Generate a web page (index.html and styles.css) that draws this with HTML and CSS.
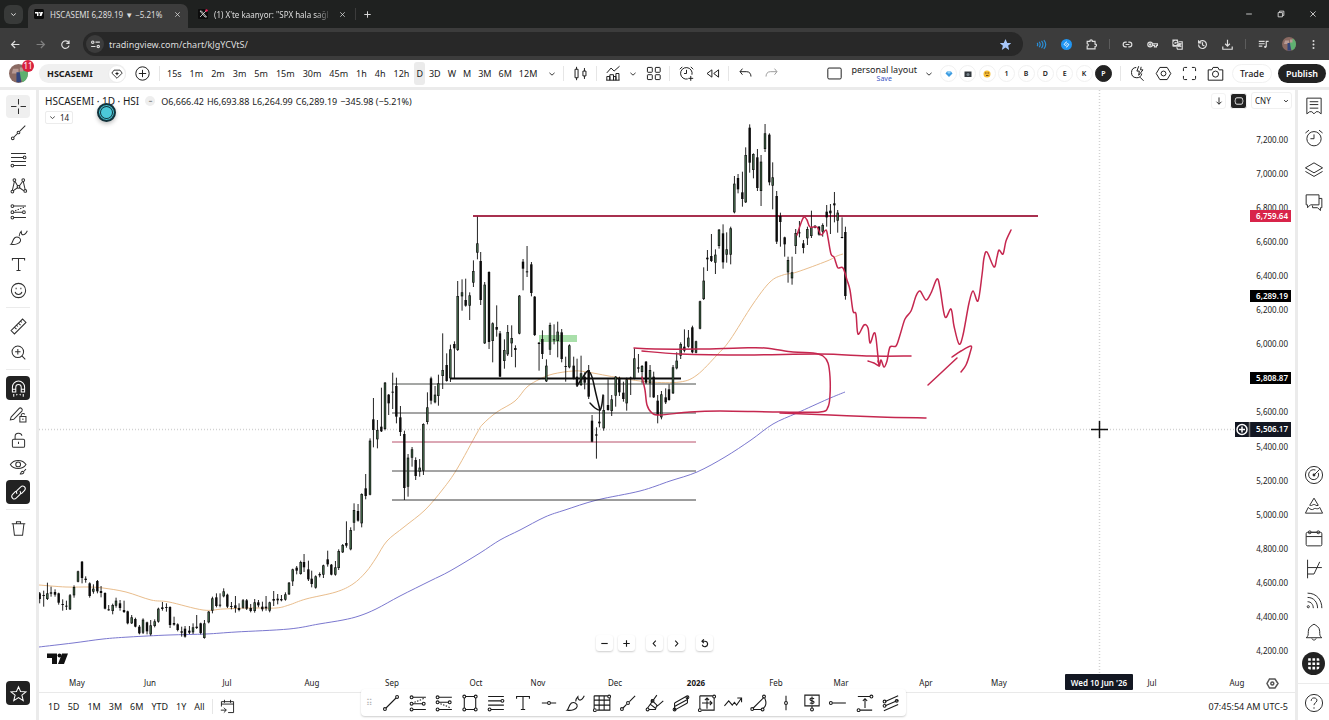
FILE: index.html
```
<!DOCTYPE html>
<html lang="en">
<head>
  <meta charset="UTF-8">
  <title>HSCASEMI 6,289.19 ▼ −5.21%</title>
  <link rel="stylesheet" href="styles.css">
</head>
<body>

  <svg class="sprite" aria-hidden="true">
    <symbol id="i-cross" viewBox="0 0 28 28"><path d="M14 3v8M14 17v8M3 14h8M17 14h8"/></symbol>
    <symbol id="i-trend" viewBox="0 0 28 28"><path d="M7 21L21 7"/><circle cx="5.5" cy="22.5" r="2"/><circle cx="22.500" cy="5.500" r="2"/></symbol>
    <symbol id="i-ray" viewBox="0 0 28 28"><path d="M7 21l5-5M16 12l8-8"/><circle cx="5.500" cy="22.500" r="2"/><circle cx="14" cy="14" r="2"/></symbol>
    <symbol id="i-fib" viewBox="0 0 28 28"><path d="M3 5h22M3 11h18M3 17h22M7 23h18"/><circle cx="23" cy="11" r="2"/><circle cx="5" cy="23" r="2"/></symbol>
    <symbol id="i-pattern" viewBox="0 0 28 28"><path d="M5 21L8 8M9 8l4 7M15 15l5-7M21 8l3 13M6 22l7-5M15 17l7 5"/><circle cx="5" cy="23" r="2"/><circle cx="8" cy="6" r="2"/><circle cx="14" cy="16" r="2"/><circle cx="21" cy="6" r="2"/><circle cx="24" cy="22" r="2"/></symbol>
    <symbol id="i-long" viewBox="0 0 28 28"><path d="M7 6h18M7 15h13M7 23h18"/><path stroke-dasharray="2 2" d="M9 13l15-6"/><circle cx="5" cy="6" r="2"/><circle cx="5" cy="15" r="2"/><circle cx="22" cy="15" r="2"/><circle cx="5" cy="23" r="2"/></symbol>
    <symbol id="i-short" viewBox="0 0 28 28"><path d="M7 6h18M7 13h13M7 23h18"/><path stroke-dasharray="2 2" d="M9 15l15 6"/><circle cx="5" cy="6" r="2"/><circle cx="5" cy="13" r="2"/><circle cx="22" cy="13" r="2"/><circle cx="5" cy="23" r="2"/></symbol>
    <symbol id="i-brush" viewBox="0 0 28 28"><path d="M3 24c2-1 2-7 6-10 4-2 9 1 8 5-1 4-8 6-14 5zM15 12c0-3 1-5 3-7 0 3 1 5 3 5s4-2 6-6"/></symbol>
    <symbol id="i-text" viewBox="0 0 28 28"><path d="M5 8V5h18v3M14 5v18M11 23h6"/></symbol>
    <symbol id="i-smile" viewBox="0 0 28 28"><circle cx="14" cy="14" r="10.500"/><path d="M9 16c1 5 9 5 10 0M10.500 10v2M17.500 10v2"/></symbol>
    <symbol id="i-ruler" viewBox="0 0 28 28"><path d="M3 20L20 3l5 5L8 25zM8 15l3 3M11 12l2 2M14 9l3 3M17 6l2 2"/></symbol>
    <symbol id="i-zoom" viewBox="0 0 28 28"><circle cx="13" cy="13" r="8.500"/><path d="M19 19l5 5M9 13h8M13 9v8"/></symbol>
    <symbol id="i-magnet" viewBox="0 0 28 28"><path d="M5 19v-7a9 9 0 0 1 18 0v7h-5v-7a4 4 0 0 0-8 0v7zM5 15h5M18 15h5M7 22v4M21 22v4M12 22l-1 2M16 22l1 2"/></symbol>
    <symbol id="i-penlock" viewBox="0 0 28 28"><path d="M3 18L15 5c2-2 6 1 4 4L7 21l-5 1zM16 17h9v8h-9zM18 17v-2c0-3 5-3 5-1M20.500 20v2"/></symbol>
    <symbol id="i-lock" viewBox="0 0 28 28"><rect x="5" y="12" width="18" height="12" rx="2"/><path d="M9 12V8c0-6 9-6 10-1M14 16v3"/></symbol>
    <symbol id="i-eye" viewBox="0 0 28 28"><path d="M2 11c5-8 18-8 23 0-5 8-18 8-23 0zM16 25c2 0 1-4 4-4 4 1 1 5-4 4zM22 21l3-3"/><circle cx="13.500" cy="11" r="3.500"/></symbol>
    <symbol id="i-link" viewBox="0 0 28 28"><path d="M12 16c-2-2-1-4 0-5l5-5c4-4 9 1 6 5l-5 5M16 12c2 2 1 4 0 5l-5 5c-4 4-9-1-6-5l5-5"/></symbol>
    <symbol id="i-trash" viewBox="0 0 28 28"><path d="M4 7h20M11 7V4h6v3M6 7l2 17h12l2-17"/></symbol>
    <symbol id="i-star" viewBox="0 0 28 28"><path d="M14 4l3 7 8 .500-6 5 2 8-7-4.500-7 4.500 2-8-6-5 8-.500z"/></symbol>

    <symbol id="i-rect" viewBox="0 0 28 28"><path d="M6 7v14M22 7v14M8 5h12M8 23h12"/><circle cx="6" cy="5" r="2"/><circle cx="22" cy="5" r="2"/><circle cx="6" cy="23" r="2"/><circle cx="22" cy="23" r="2"/></symbol>
    <symbol id="i-hline" viewBox="0 0 28 28"><path d="M4 14h8M16 14h8"/><circle cx="14" cy="14" r="2"/></symbol>
    <symbol id="i-vline" viewBox="0 0 28 28"><path d="M14 4v8M14 16v8"/><circle cx="14" cy="14" r="2"/></symbol>
    <symbol id="i-hray" viewBox="0 0 28 28"><path d="M6 14h19"/><circle cx="4" cy="14" r="2"/></symbol>
    <symbol id="i-gann" viewBox="0 0 28 28"><path d="M3 4h19M3 4v18M7 24h18V7M3 10h22M3 17h22M10 4v20M17 4v20"/><circle cx="24" cy="5" r="2"/><circle cx="4" cy="24" r="2"/></symbol>
    <symbol id="i-fork" viewBox="0 0 28 28"><path d="M5 21L18 3M7 23h9l2-6M13 12l6 6 8-7M9 16l8 6M11 9l-1 4"/><circle cx="5" cy="23" r="2"/><circle cx="12" cy="11" r="2"/></symbol>
    <symbol id="i-channel" viewBox="0 0 28 28"><path d="M5 14l16-9M5 19l18-10M5 24l18-10M5 14v10M23 5v9"/><circle cx="5" cy="23" r="2"/><circle cx="23" cy="6" r="2"/></symbol>
    <symbol id="i-range" viewBox="0 0 28 28"><path d="M4 4h18M4 4v18M7 24h17V7M14 7v15M11 10l3-3 3 3M7 14h14M18 11l3 3-3 3"/><circle cx="24" cy="5" r="2"/><circle cx="4" cy="24" r="2"/></symbol>
    <symbol id="i-wave" viewBox="0 0 28 28"><path d="M2 18l6-7 5 6 3-4 3 4 7-10M20 7h6v6"/></symbol>
    <symbol id="i-arc" viewBox="0 0 28 28"><path d="M6 21L21 6M6 23h11M22 7c3 7 2 12-3 15"/><circle cx="4.500" cy="22.500" r="2"/><circle cx="21" cy="5" r="2"/><circle cx="19" cy="23" r="2"/></symbol>
    <symbol id="i-price" viewBox="0 0 28 28"><path d="M4 3h20v15H4zM14 18v3M17 8c-6-3-8 2-3 3s3 5-3 3M14 5v11"/><circle cx="14" cy="23" r="2"/></symbol>
    <symbol id="i-measure" viewBox="0 0 28 28"><path d="M4 5h17M7 24h17M14 9v12M11 11l3-3 3 3"/><circle cx="23" cy="5" r="2"/><circle cx="5" cy="24" r="2"/></symbol>
    <symbol id="i-parallel" viewBox="0 0 28 28"><path d="M6 12L24 4M6 18l18-8M4 25l20-9"/><circle cx="5" cy="12" r="2"/><circle cx="5" cy="18" r="2"/><circle cx="22" cy="11" r="2"/></symbol>

    <symbol id="i-chev" viewBox="0 0 28 28"><path d="M5 10l9 8 9-8"/></symbol>
    <symbol id="i-gem" viewBox="0 0 28 28"><path d="M7 5h14l5 7-12 12L2 12z"/><path class="solid" d="M14 8l1.500 3.500L19 13l-3.500 1.500L14 18l-1.500-3.500L9 13l3.500-1.500z"/></symbol>
    <symbol id="i-plus-circle" viewBox="0 0 28 28"><circle cx="14" cy="14" r="11"/><path d="M14 8v12M8 14h12"/></symbol>
    <symbol id="i-candles" viewBox="0 0 28 28"><path d="M5 7h5v14H5zM7.500 3v4M7.500 21v4M18 10h5v8h-5zM20.500 5v5M20.500 18v5"/></symbol>
    <symbol id="i-indicators" viewBox="0 0 28 28"><path d="M3 25v-6h5v6M8 25V16h6v9M14 25v-6h4v6M18 25V14h5v11M2 25h22M3 13l7-8 5 5 9-8"/></symbol>
    <symbol id="i-grid" viewBox="0 0 28 28"><rect x="4" y="4" width="8" height="8" rx="1"/><rect x="17" y="4" width="8" height="8" rx="1"/><rect x="4" y="16" width="8" height="8" rx="1"/><rect x="17" y="16" width="8" height="8" rx="1"/></symbol>
    <symbol id="i-alert" viewBox="0 0 28 28"><path d="M23 16a9.500 9.500 0 1 0-7 7M14 8v6h-4M3 7l4-4M21 3l4 4M21 18v8M17 22h8"/></symbol>
    <symbol id="i-clock" viewBox="0 0 28 28"><circle cx="14" cy="15" r="10"/><path d="M14 9v6h-5M2 7l5-4M21 3l5 4"/></symbol>
    <symbol id="i-rewind" viewBox="0 0 28 28"><path d="M13 8v12l-8-6zM24 8v12l-8-6z"/></symbol>
    <symbol id="i-undo" viewBox="0 0 28 28"><path d="M9 6l-4 5 4 5M5 11h11c5 0 7 4 7 8"/></symbol>
    <symbol id="i-redo" viewBox="0 0 28 28"><path d="M19 6l4 5-4 5M23 11H12c-5 0-7 4-7 8"/></symbol>
    <symbol id="i-square" viewBox="0 0 28 28"><rect x="3" y="5" width="22" height="18" rx="2"/></symbol>
    <symbol id="i-search" viewBox="0 0 28 28"><path d="M12 4a8.500 8.500 0 1 0 9 10M18 20l6 6M16 2l-3 8h4l-1 7 7-9h-4l1-5"/></symbol>
    <symbol id="i-hex" viewBox="0 0 28 28"><path d="M8 4h12l6 10-6 10H8L2 14z"/><circle cx="14" cy="14" r="4"/></symbol>
    <symbol id="i-full" viewBox="0 0 28 28"><path d="M4 10V6q0-2 2-2h4M18 4h4q2 0 2 2v4M24 18v4q0 2-2 2h-4M10 24H6q-2 0-2-2v-4"/></symbol>
    <symbol id="i-camera" viewBox="0 0 28 28"><path d="M2 8h6l2-4h8l2 4h6v17H2z"/><circle cx="14" cy="15" r="5"/></symbol>

    <symbol id="i-list" viewBox="0 0 28 28"><path d="M4 3h20v22l-4-3h-3l-3 3-3-3H8l-4 3zM8 8h12M8 12h12M8 17h12"/></symbol>
    <symbol id="i-layers" viewBox="0 0 28 28"><path d="M14 4l12 7-12 7-12-7zM2 16l12 7 12-7"/></symbol>
    <symbol id="i-chat" viewBox="0 0 28 28"><path d="M3 4h18v14H9l-4 4v-4H3zM21 9h4v13h-2v4l-4-4h-7v-3"/></symbol>
    <symbol id="i-target" viewBox="0 0 28 28"><circle cx="14" cy="14" r="12"/><path d="M20 11a7 7 0 1 1-4-4M14 14l8-8"/><circle class="solid" cx="14" cy="14" r="2"/></symbol>
    <symbol id="i-pyramid" viewBox="0 0 28 28"><path d="M14 3l6 10c-3 2-4-2-7-1-2 1-3 2-5 1zM6 16l-4 8h24l-4-8c-3 4-6 0-8 2-3 2-5 1-8-2z"/></symbol>
    <symbol id="i-calendar" viewBox="0 0 28 28"><rect x="3" y="6" width="22" height="19" rx="2"/><path d="M3 12h22M10 6h8"/><circle cx="8" cy="6" r="2"/><circle cx="20" cy="6" r="2"/></symbol>
    <symbol id="i-options" viewBox="0 0 28 28"><path d="M5 1v26M5 12h20M5 21h9L22 4"/></symbol>
    <symbol id="i-feed" viewBox="0 0 28 28"><circle cx="6" cy="22" r="1.500"/><path d="M5 15c5 0 8 4 8 9M5 9c9 0 14 7 14 15M5 3c13 0 20 10 20 21"/></symbol>
    <symbol id="i-bell" viewBox="0 0 28 28"><path d="M3 22c3-2 3-4 3-9 0-6 5-8 8-10 3 2 8 4 8 10 0 5 0 7 3 9zM11 23c1 3 5 3 6 0"/></symbol>
    <symbol id="i-apps" viewBox="0 0 28 28"><path class="solid" d="M4 4h5v5H4zM12 4h5v5h-5zM20 4h5v5h-5zM4 12h5v5H4zM12 12h5v5h-5zM20 12h5v5h-5zM4 20h5v5H4zM12 20h5v5h-5zM20 20h5v5h-5z"/></symbol>
    <symbol id="i-help" viewBox="0 0 28 28"><circle cx="14" cy="14" r="12"/><path d="M10 11c0-6 9-5 8 0-1 3-4 3-4 6M14 20v2"/></symbol>
    <symbol id="i-goto" viewBox="0 0 28 28"><path d="M4 14V6h20v18h-9M4 10h20M9 3v5M19 3v5M3 20h9M8 16l4 4-4 4"/></symbol>

    <symbol id="i-back" viewBox="0 0 28 28"><path d="M24 14H5M13 5l-9 9 9 9"/></symbol>
    <symbol id="i-forward" viewBox="0 0 28 28"><path d="M4 14h19M15 5l9 9-9 9"/></symbol>
    <symbol id="i-reload" viewBox="0 0 28 28"><path d="M23 17a9.500 9.500 0 1 1-2-9l2 3M23 4v7h-7"/></symbol>
    <symbol id="i-tune" viewBox="0 0 28 28"><circle cx="7" cy="8" r="3"/><circle cx="21" cy="19" r="3"/><path d="M14 8h11M3 19h11"/></symbol>
    <symbol id="i-close" viewBox="0 0 28 28"><path d="M5 5l18 18M23 5L5 23"/></symbol>
    <symbol id="i-min" viewBox="0 0 28 28"><path d="M4 14h20"/></symbol>
    <symbol id="i-plus" viewBox="0 0 28 28"><path d="M14 4v20M4 14h20"/></symbol>
    <symbol id="i-restore" viewBox="0 0 28 28"><path d="M4 9h15v15H4zM9 9V4h15v15h-5"/></symbol>
    <symbol id="i-puzzle" viewBox="0 0 28 28"><path d="M3 6h7c-1-5 7-5 6 0h7v7c5 0 5 6 0 6v6H3v-7c4 0 4-6 0-6z"/></symbol>
    <symbol id="i-chain" viewBox="0 0 28 28"><path d="M12 8H9a6 6 0 0 0 0 12h3M16 8h3a6 6 0 0 1 0 12h-3M9 14h10"/></symbol>
    <symbol id="i-key" viewBox="0 0 28 28"><circle cx="8" cy="14" r="6"/><circle cx="8" cy="14" r="1.500"/><path d="M14 12h13v4h-3v4h-5v-4h-5"/></symbol>
    <symbol id="i-translate" viewBox="0 0 28 28"><path class="solid" d="M1 1h14l4 19H3q-2 0-2-2z"/><path class="letter" d="M12 8a4 4 0 1 0 0 4H9"/><path d="M17 7h9v19H14l-2-5M17 12h7M20 10v2M22 12c-1 4-3 6-5 8M18 14l5 6"/></symbol>
    <symbol id="i-history" viewBox="0 0 28 28"><path d="M4 14a10 10 0 1 0 3-7L4 10M4 3v7h7M14 8v7l5 3"/></symbol>
    <symbol id="i-download" viewBox="0 0 28 28"><path d="M14 2v15M8 12l6 6 6-6M2 19v7h24v-7"/></symbol>
    <symbol id="i-music" viewBox="0 0 28 28"><path d="M2 6h15M2 12h15M2 18h9M21 20V6h6"/><circle class="solid" cx="18.500" cy="20" r="3"/></symbol>
    <symbol id="i-left" viewBox="0 0 28 28"><path d="M18 5l-8 9 8 9"/></symbol>
    <symbol id="i-right" viewBox="0 0 28 28"><path d="M10 5l8 9-8 9"/></symbol>
    <symbol id="i-reset" viewBox="0 0 28 28"><path d="M6 7h9a8.500 8.500 0 1 1-8 11M12 1L6 7l6 6"/></symbol>
    <symbol id="i-down" viewBox="0 0 28 28"><path d="M14 4v19M7 16l7 7 7-7"/></symbol>
    <symbol id="i-auto" viewBox="0 0 28 28"><path d="M4 11V9q0-4 4-4h12q4 0 4 4v2M4 17v2q0 4 4 4h12q4 0 4-4v-2M1 14h5M22 14h5"/></symbol>
    <symbol id="i-avatar" viewBox="0 0 28 28"><circle class="av1" cx="14" cy="14" r="14"/><path class="av2" d="M14 14l8-11a14 14 0 0 1-2 24z"/><path class="av3" d="M6 7h8v7H4zM16 5h5v6h-5z"/><path class="av4" d="M11 12h5l2 15h-7z"/></symbol>
  </svg>

  <header class="browser">
    <div class="tabs">
      <button class="tab-search" aria-label="Search tabs"><svg><use href="#i-chev"/></svg></button>
      <div class="tab active">
        <svg class="favicon" viewBox="0 0 20 20"><rect class="fav-bg" width="20" height="20" rx="3"/><path class="fav-fg" d="M2 6h7v8H6V9H2zM13 6h5l-3 8h-4z"/><circle class="fav-fg" cx="11" cy="7.500" r="1.500"/></svg>
        <span class="tab-title">HSCASEMI 6,289.19 ▼ −5.21%</span>
        <button class="tab-close" aria-label="Close tab"><svg><use href="#i-close"/></svg></button>
      </div>
      <div class="tab">
        <svg class="favicon" viewBox="0 0 20 20"><rect class="fav-bg" width="20" height="20" rx="2"/><path class="fav-line" d="M4 4l10 12h3L7 4zM16 4L4 16"/><circle class="fav-dot" cx="17" cy="3" r="2.500"/></svg>
        <span class="tab-title faded-end">(1) X'te kaanyor: "SPX hala sağl</span>
        <button class="tab-close" aria-label="Close tab"><svg><use href="#i-close"/></svg></button>
      </div>
      <button class="tab-new" aria-label="New tab"><svg><use href="#i-plus"/></svg></button>
      <div class="window-buttons">
        <button aria-label="Minimize"><svg><use href="#i-min"/></svg></button>
        <button aria-label="Restore"><svg><use href="#i-restore"/></svg></button>
        <button aria-label="Close"><svg><use href="#i-close"/></svg></button>
      </div>
    </div>
    <div class="omnibar">
      <button aria-label="Back"><svg><use href="#i-back"/></svg></button>
      <button class="dim" aria-label="Forward"><svg><use href="#i-forward"/></svg></button>
      <button aria-label="Reload"><svg><use href="#i-reload"/></svg></button>
      <div class="address">
        <button class="site-info" aria-label="Site information"><svg><use href="#i-tune"/></svg></button>
        <input class="url" type="text" aria-label="Address" value="tradingview.com/chart/kJgYCVtS/">
        <button class="bookmark" aria-label="Bookmark"><svg><use href="#i-star"/></svg></button>
      </div>
      <div class="extensions">
        <button aria-label="Reader"><svg class="sound" viewBox="0 0 28 28"><path d="M3 10c2 3 2 5 0 8M8 7c4 5 4 9 0 14M14 5c5 6 5 12 0 18M20 3c6 7 6 15 0 22"/></svg></button>
        <button aria-label="Shazam"><svg class="shazam" viewBox="0 0 28 28"><circle cx="14" cy="14" r="14"/><path d="M15 7l-5 4c-4 4 1 7 4 4M13 21l5-4c4-4-1-7-4-4"/></svg></button>
        <button aria-label="Extensions"><svg><use href="#i-puzzle"/></svg></button>
        <span class="bar-split"></span>
        <button aria-label="Copy link"><svg><use href="#i-chain"/></svg></button>
        <button aria-label="Passwords"><svg><use href="#i-key"/></svg></button>
        <button aria-label="Translate"><svg><use href="#i-translate"/></svg></button>
        <button aria-label="History"><svg><use href="#i-history"/></svg></button>
        <button aria-label="Downloads"><svg><use href="#i-download"/></svg></button>
        <span class="bar-split"></span>
        <button aria-label="Media"><svg><use href="#i-music"/></svg></button>
        <button aria-label="Profile"><svg class="avatar"><use href="#i-avatar"/></svg></button>
        <button aria-label="Menu"><svg class="kebab" viewBox="0 0 28 28"><circle cx="14" cy="5" r="2.500"/><circle cx="14" cy="14" r="2.500"/><circle cx="14" cy="23" r="2.500"/></svg></button>
      </div>
    </div>
  </header>

  <div class="topbar">
    <button class="me" aria-label="Account"><svg class="avatar"><use href="#i-avatar"/></svg><span class="badge">11</span></button>
    <button class="symbol">HSCASEMI<span class="gem"><svg><use href="#i-gem"/></svg></span></button>
    <button class="icon" aria-label="Compare"><svg><use href="#i-plus-circle"/></svg></button>
    <span class="split"></span>
    <div class="intervals">
      <button>15s</button><button>1m</button><button>2m</button><button>3m</button><button>5m</button><button>15m</button><button>30m</button><button>45m</button><button>1h</button><button>4h</button><button>12h</button><button class="on">D</button><button>3D</button><button>W</button><button>M</button><button>3M</button><button>6M</button><button>12M</button>
    </div>
    <button class="chev more" aria-label="More intervals"><svg><use href="#i-chev"/></svg></button>
    <span class="split"></span>
    <button class="icon" aria-label="Candles"><svg><use href="#i-candles"/></svg></button>
    <span class="split"></span>
    <button class="icon" aria-label="Indicators"><svg><use href="#i-indicators"/></svg></button>
    <button class="chev" aria-label="Favourite indicators"><svg><use href="#i-chev"/></svg></button>
    <button class="icon" aria-label="Templates"><svg><use href="#i-grid"/></svg></button>
    <span class="split"></span>
    <button class="icon" aria-label="Alert"><svg><use href="#i-alert"/></svg></button>
    <button class="icon" aria-label="Replay"><svg><use href="#i-rewind"/></svg></button>
    <span class="split"></span>
    <button class="icon" aria-label="Undo"><svg><use href="#i-undo"/></svg></button>
    <button class="icon faded" aria-label="Redo"><svg><use href="#i-redo"/></svg></button>

    <div class="topbar-right">
      <button class="icon" aria-label="Layout"><svg><use href="#i-square"/></svg></button>
      <button class="layout-name">personal layout<span class="save">Save</span></button>
      <button class="chev" aria-label="Layouts"><svg><use href="#i-chev"/></svg></button>
      <div class="dots">
        <button aria-label="Gem layout"><svg viewBox="0 0 16 16"><path fill="#3d9be0" d="M4 3h8l3 4-7 7-7-7z"/><path fill="#8ed0f7" d="M4 3h8l-2 4H6z"/></svg></button>
        <button aria-label="Camera layout"><svg viewBox="0 0 16 16"><path fill="#33383d" d="M1 3h14v11H1z"/><circle fill="#7a8790" cx="8" cy="9" r="3"/></svg></button>
        <button aria-label="Face layout"><svg viewBox="0 0 16 16"><circle fill="#f5bd32" cx="8" cy="8" r="7"/><path fill="#7b4a18" d="M4 5h3v2H4zM9 5h3v2H9zM6 10h5v2H6z"/></svg></button>
        <button>1</button><button>B</button><button>D</button><button>E</button><button>K</button><button class="on">P</button>
      </div>
      <span class="split"></span>
      <button class="icon wide" aria-label="Quick search"><svg><use href="#i-search"/></svg></button>
      <button class="icon wide" aria-label="Settings"><svg><use href="#i-hex"/></svg></button>
      <button class="icon wide" aria-label="Fullscreen"><svg><use href="#i-full"/></svg></button>
      <button class="icon wide" aria-label="Snapshot"><svg><use href="#i-camera"/></svg></button>
      <button class="trade">Trade</button>
      <button class="publish">Publish</button>
    </div>
  </div>

  <div class="workspace">
    <nav class="rail left-rail">
      <div class="tools tools-draw">
        <button class="picked" aria-label="Cross"><svg><use href="#i-cross"/></svg></button>
        <button aria-label="Trend line"><svg><use href="#i-ray"/></svg></button>
        <button aria-label="Fib retracement"><svg><use href="#i-fib"/></svg></button>
        <button aria-label="Pattern"><svg><use href="#i-pattern"/></svg></button>
        <button aria-label="Position"><svg><use href="#i-long"/></svg></button>
        <button aria-label="Brush"><svg><use href="#i-brush"/></svg></button>
        <button aria-label="Text"><svg><use href="#i-text"/></svg></button>
        <button aria-label="Emoji"><svg><use href="#i-smile"/></svg></button>
      </div>
      <div class="tools">
        <button aria-label="Measure"><svg><use href="#i-ruler"/></svg></button>
        <button aria-label="Zoom in"><svg><use href="#i-zoom"/></svg></button>
      </div>
      <div class="tools">
        <button class="dark" aria-label="Magnet"><svg><use href="#i-magnet"/></svg></button>
        <button aria-label="Stay in drawing mode"><svg><use href="#i-penlock"/></svg></button>
        <button aria-label="Lock drawings"><svg><use href="#i-lock"/></svg></button>
        <button aria-label="Hide drawings"><svg><use href="#i-eye"/></svg></button>
        <button class="dark" aria-label="Sync drawings"><svg><use href="#i-link"/></svg></button>
      </div>
      <div class="tools">
        <button aria-label="Remove"><svg><use href="#i-trash"/></svg></button>
      </div>
      <button class="dark fav" aria-label="Favorites"><svg><use href="#i-star"/></svg></button>
    </nav>

    <main class="center">
      <div class="pane">
        <svg class="chart" id="chart" viewBox="39 90 1256 602" preserveAspectRatio="xMinYMin meet"></svg>

        <div class="legend">
          <div class="legend-row">
            <span class="legend-name">HSCASEMI · 1D · HSI</span>
            <span class="legend-dash">━</span>
            <span class="ohlc"><span>O6,666.42</span><span>H6,693.88</span><span>L6,264.99</span><span>C6,289.19</span><span>−345.98 (−5.21%)</span></span>
          </div>
          <button class="collapse"><svg><use href="#i-chev"/></svg>14</button>
        </div>
        <span class="pointer"></span>

        <div class="scale-controls">
          <button aria-label="Move pane down"><svg><use href="#i-down"/></svg></button>
          <button class="dark" aria-label="Auto scale"><svg><use href="#i-auto"/></svg></button>
          <label class="currency">
            <select aria-label="Currency"><option>CNY</option></select>
            <svg><use href="#i-chev"/></svg>
          </label>
        </div>

        <div class="nav-controls">
          <button aria-label="Zoom out"><svg><use href="#i-min"/></svg></button>
          <button aria-label="Zoom in"><svg><use href="#i-plus"/></svg></button>
          <span></span>
          <button aria-label="Scroll left"><svg><use href="#i-left"/></svg></button>
          <button aria-label="Scroll right"><svg><use href="#i-right"/></svg></button>
          <span></span>
          <button aria-label="Reset chart"><svg><use href="#i-reset"/></svg></button>
        </div>
      </div>

      <footer class="ranges">
        <button>1D</button><button>5D</button><button>1M</button><button>3M</button><button>6M</button><button>YTD</button><button>1Y</button><button>All</button>
        <span class="split"></span>
        <button class="goto" aria-label="Go to"><svg><use href="#i-goto"/></svg></button>
        <button class="clock">07:45:54 AM UTC-5</button>
      </footer>

      <div class="favorites">
        <span class="grip">⠿</span>
        <button aria-label="Trend line"><svg><use href="#i-trend"/></svg></button>
        <button aria-label="Long position"><svg><use href="#i-long"/></svg></button>
        <button aria-label="Short position"><svg><use href="#i-short"/></svg></button>
        <button aria-label="Rectangle"><svg><use href="#i-rect"/></svg></button>
        <button aria-label="Fib retracement"><svg><use href="#i-fib"/></svg></button>
        <button aria-label="Text"><svg><use href="#i-text"/></svg></button>
        <button aria-label="Horizontal line"><svg><use href="#i-hline"/></svg></button>
        <button aria-label="Brush"><svg><use href="#i-brush"/></svg></button>
        <button aria-label="Gann box"><svg><use href="#i-gann"/></svg></button>
        <button aria-label="Ray"><svg><use href="#i-ray"/></svg></button>
        <button aria-label="Pitchfork"><svg><use href="#i-fork"/></svg></button>
        <button aria-label="Channel"><svg><use href="#i-channel"/></svg></button>
        <button aria-label="Date and price range"><svg><use href="#i-range"/></svg></button>
        <button aria-label="Path"><svg><use href="#i-wave"/></svg></button>
        <button aria-label="Arc"><svg><use href="#i-arc"/></svg></button>
        <button aria-label="Vertical line"><svg><use href="#i-vline"/></svg></button>
        <button aria-label="Price note"><svg><use href="#i-price"/></svg></button>
        <button aria-label="Horizontal ray"><svg><use href="#i-hray"/></svg></button>
        <button aria-label="Price range"><svg><use href="#i-measure"/></svg></button>
        <button aria-label="Parallel channel"><svg><use href="#i-parallel"/></svg></button>
      </div>
    </main>

    <aside class="rail right-rail">
      <div class="panels">
        <button aria-label="Watchlist"><svg><use href="#i-list"/></svg></button>
        <button aria-label="Alerts"><svg><use href="#i-clock"/></svg></button>
        <button aria-label="Object tree"><svg><use href="#i-layers"/></svg></button>
        <button aria-label="Chats"><svg><use href="#i-chat"/></svg></button>
      </div>
      <div class="panels panels-low">
        <button aria-label="Screener"><svg><use href="#i-target"/></svg></button>
        <button aria-label="Pine"><svg><use href="#i-pyramid"/></svg></button>
        <button aria-label="Calendar"><svg><use href="#i-calendar"/></svg></button>
        <button aria-label="Options"><svg><use href="#i-options"/></svg></button>
        <button aria-label="News"><svg><use href="#i-feed"/></svg></button>
        <button aria-label="Notifications"><svg><use href="#i-bell"/></svg></button>
        <button class="apps" aria-label="Products"><svg><use href="#i-apps"/></svg></button>
      </div>
      <button class="help" aria-label="Help"><svg><use href="#i-help"/></svg></button>
    </aside>
  </div>

  <script src="chart.js"></script>
</body>
</html>
```
FILE: styles.css
```
* { box-sizing: border-box; }
body { margin: 0; height: 100vh; display: flex; flex-direction: column; overflow: hidden; font-family: "Noto Sans", sans-serif; font-size: 9px; color: #1a1a1a; background: #ebebeb; }
button, input, select { font: inherit; color: inherit; border: 0; background: none; padding: 0; margin: 0; }
button { display: flex; align-items: center; justify-content: center; flex: none; white-space: nowrap; }
svg { fill: none; stroke: currentColor; stroke-width: 1.5; width: 20px; height: 20px; flex: none; }
.sprite { position: absolute; width: 0; height: 0; }
.solid { fill: currentColor; stroke: none; }
.letter { stroke: #3c3c3c; }
.avatar { stroke: none; }
.av1 { fill: #8a6a62; }
.av2 { fill: #5fb070; }
.av3 { fill: #b79a94; }
.av4 { fill: #33457c; }

/* browser chrome */
.browser { color: #dedede; background: #1f2120; flex: none; }
.browser svg { width: 11px; height: 11px; stroke-width: 3; }
.tabs { display: flex; align-items: center; height: 28px; padding-left: 4px; }
.tab-search { width: 19px; height: 19px; border-radius: 6px; background: #383a39; margin-right: 5px; }
.tabs .tab-search svg { width: 7px; height: 7px; stroke-width: 4; }
.tab { display: flex; align-items: center; align-self: flex-end; width: 160px; height: 24px; padding: 0 6px 4px; border-radius: 7px 7px 0 0; }
.tab + .tab { width: 165px; padding-left: 10px; }
.tab.active { background: #3c3c3c; }
.tab .favicon { width: 10px; height: 10px; stroke: none; }
.fav-bg { fill: #0c0c0c; }
.fav-fg { fill: #fff; }
.fav-line { stroke: #eee; stroke-width: 1.5; }
.fav-dot { fill: #f4245e; }
.tab-title { flex: 1; min-width: 0; margin: 0 4px 0 6px; white-space: nowrap; font-size: 8px; }
.faded-end { -webkit-mask-image: linear-gradient(90deg, #000 85%, transparent); mask-image: linear-gradient(90deg, #000 85%, transparent); }
.tab .tab-close { width: 10px; }
.tabs .tab-close svg { width: 7px; height: 7px; }
.tab-new { width: 24px; height: 12px; border-left: 1px solid #3c3c3c; margin-left: 2px; }
.tabs .tab-new svg { width: 9px; height: 9px; }
.window-buttons { display: flex; margin-left: auto; }
.window-buttons button { width: 32px; height: 28px; }
.window-buttons svg { width: 8px; height: 8px; }
.omnibar { display: flex; align-items: center; height: 32px; padding: 0 3px; background: #3c3c3c; }
.omnibar > button { width: 25px; height: 24px; }
.omnibar > button.dim { color: #808080; }
.address { display: flex; align-items: center; flex: 1; height: 24px; margin-left: 5px; border-radius: 12px; background: #282828; }
.address .site-info { width: 18px; height: 18px; border-radius: 9px; background: #3c3c3c; margin-left: 3px; }
.url { flex: 1; min-width: 0; padding: 0 5px; font-size: 9px; outline: none; }
.address .bookmark { width: 36px; color: #a8c7fa; }
.bookmark svg { fill: #a8c7fa; }
.extensions { display: flex; align-items: center; margin-left: 6px; }
.extensions button { width: 25px; height: 24px; }
.bar-split { width: 1px; height: 10px; background: #5c5c5c; margin: 0 5px; }
.extensions .sound { stroke: #2a8fd8; }
.extensions .shazam { fill: #2196f3; stroke: none; }
.shazam path { fill: none; stroke: #fff; stroke-width: 2.5; }
.extensions .avatar { width: 14px; height: 14px; stroke: none; }
.extensions .kebab { fill: #dedede; stroke: none; }

/* chart header */
.topbar { display: flex; align-items: center; flex: none; height: 27px; padding: 0 3px 0 8px; background: #fff; }
.topbar svg { width: 17px; height: 17px; stroke-width: 1.6; }
.me { position: relative; width: 20px; height: 20px; }
.me .avatar { width: 19px; height: 19px; stroke: none; }
.badge { position: absolute; top: -4px; right: -6px; width: 12px; height: 12px; border-radius: 6px; background: #d8213f; color: #fff; font-size: 8px; line-height: 12px; }
.symbol { justify-content: space-between; width: 87px; height: 19px; margin-left: 11px; padding: 0 0 0 8px; border-radius: 10px; background: #f0f0f0; font-weight: 700; font-size: 9px; }
.gem { display: flex; align-items: center; justify-content: center; width: 18px; height: 18px; border: 1px solid #ececec; border-radius: 9px; background: #fff; }
.topbar .gem svg { width: 12px; height: 12px; stroke-width: 2; }
.icon { width: 26px; height: 23px; }
.symbol + .icon { width: 33px; }
.icon.faded { color: #9a9a9a; }
.split { width: 1px; height: 15px; background: #e6e6e6; margin: 0 3px; flex: none; }
.symbol + .icon + .split { margin: 0 3px 0 0; }
.intervals { display: flex; }
.intervals button { height: 23px; padding: 0 4px; border-radius: 3px; }
.intervals .on { background: #ebebeb; padding: 0 2px; margin: 0 1px; }
.intervals .on ~ button { padding: 0 4px 0 3px; }
.topbar .chev { width: 14px; }
.topbar .more { margin: 0 1px 0 4px; }
.topbar .chev svg { width: 8px; height: 8px; stroke-width: 3; }
.topbar-right { display: flex; align-items: center; margin-left: auto; }
.layout-name { flex-direction: column; margin: 0 5px 0 4px; font-size: 9px; line-height: 11px; }
.save { font-size: 7px; line-height: 8px; color: #3a55c4; }
.dots { display: flex; justify-content: space-between; width: 172px; margin: 0 5px 0 4px; }
.dots button { width: 17px; height: 17px; border: 1px solid #f1f1f1; border-radius: 9px; font-size: 7px; font-weight: 600; }
.dots .on { background: #222; color: #fff; border-color: #222; }
.dots svg { width: 8px; height: 8px; stroke: none; }
.icon.wide { width: 26px; }
.trade { width: 40px; height: 19px; margin: 0 6px 0 4px; border: 1px solid #f1f1f1; border-radius: 10px; font-size: 9px; font-weight: 500; }
.publish { width: 48px; height: 19px; border-radius: 10px; background: #222; color: #fff; font-size: 9px; font-weight: 600; }

/* work area */
.workspace { display: flex; flex: 1; min-height: 0; gap: 3px; padding-top: 3px; }
.rail { display: flex; flex-direction: column; background: #fff; }
.rail button { color: #303030; }
.left-rail { width: 36px; padding: 5px 0 15px; align-items: center; }
.left-rail svg { width: 19px; height: 19px; }
.tools { display: flex; flex-direction: column; gap: 2px; padding-bottom: 5px; margin-bottom: 6px; border-bottom: 1px solid #ebebeb; }
.tools:nth-child(4) { border: 0; }
.tools-draw { height: 213px; justify-content: space-between; }
.tools button, .fav { width: 24px; height: 24px; border-radius: 4px; }
.tools-draw button { height: 23px; }
.tools .picked { background: #efefef; }
.rail .dark { background: #222; color: #fff; }
.fav { margin-top: auto; }
.right-rail { width: 31px; padding-bottom: 1px; align-items: center; }
.panels { display: flex; flex-direction: column; }
.panels button { width: 31px; height: 32px; }
.right-rail svg { width: 20px; height: 20px; stroke-width: 1.4; }
.panels-low { height: 225px; justify-content: space-between; margin-top: auto; padding-bottom: 4px; border-bottom: 1px solid #ebebeb; }
.panels-low button { height: 31px; }
.right-rail .apps svg { width: 23px; height: 23px; padding: 4px; border-radius: 12px; background: #222; color: #fff; }
.help { height: 32px; margin-top: 3px; }

.center { position: relative; display: flex; flex-direction: column; flex: 1; min-width: 0; background: #fff; }
.pane { position: relative; flex: 1; min-height: 0; }
.chart { display: block; width: 100%; height: 100%; stroke: none; }
.legend { position: absolute; top: 4px; left: 6px; }
.legend-row { display: flex; align-items: center; height: 14px; }
.legend-name { font-size: 10px; }
.legend-dash { width: 10px; height: 10px; margin: 0 6px; border-radius: 5px; background: #eee; color: #777; font-size: 5px; line-height: 10px; text-align: center; }
.ohlc { display: flex; gap: 3px; font-size: 9px; }
.collapse { height: 13px; margin-top: 3px; padding: 0 3px; gap: 4px; border: 1px solid #ececec; border-radius: 2px; font-size: 8px; }
.collapse svg { width: 7px; height: 7px; stroke-width: 3; }
.pointer { position: absolute; top: 13px; left: 58px; width: 19px; height: 19px; border: 2px solid #12333c; border-radius: 10px; background: #4cc9d9; box-shadow: inset 0 0 0 1px #4cc9d9, inset 0 0 0 2px #12333c, 0 2px 4px rgba(0,0,0,0.25); }
.scale-controls { position: absolute; top: 2px; right: 3px; display: flex; align-items: center; gap: 4px; }
.scale-controls button { width: 15px; height: 16px; border-radius: 3px; border: 1px solid #f3f3f3; }
.scale-controls .dark { width: 17px; background: #222; color: #fff; }
.scale-controls svg { width: 10px; height: 10px; stroke-width: 2.5; }
.currency { position: relative; display: flex; width: 41px; height: 17px; border: 1px solid #f0f0f0; border-radius: 3px; }
.currency select { flex: 1; padding-left: 3px; font-size: 8px; appearance: none; outline: none; }
.scale-controls .currency svg { position: absolute; right: 2px; top: 5px; width: 6px; height: 6px; stroke-width: 4; pointer-events: none; }
.nav-controls { position: absolute; bottom: 41px; left: 557px; display: flex; gap: 5px; }
.nav-controls span { width: 1px; }
.nav-controls button { width: 17px; height: 16px; border-radius: 3px; background: #fff; box-shadow: 0 1px 2px rgba(0,0,0,0.2); }
.nav-controls svg { width: 9px; height: 9px; stroke-width: 3.5; }
.ranges { display: flex; align-items: center; height: 28px; padding: 0 7px 0 5px; border-top: 1px solid #e9e9e9; }
.ranges button { padding: 0 4px; }
.ranges .split { margin: 0 2px 0 3px; }
.ranges svg { width: 17px; height: 17px; }
.ranges .clock { margin-left: auto; padding: 0; }
.favorites { position: absolute; left: 322px; bottom: 4px; display: flex; align-items: center; justify-content: space-between; width: 545px; height: 27px; padding: 0 2px 0 5px; border-radius: 4px; background: #fff; box-shadow: 0 1px 2px rgba(0,0,0,0.2); }
.favorites button { width: 26px; height: 26px; }
.favorites svg { width: 20px; height: 20px; }
.grip { width: 12px; color: #b5b5b5; }

/* chart drawing */
.chart text { font-size: 8px; fill: #1a1a1a; stroke: none; }
.chart .tick { text-anchor: end; }
.chart .month { text-anchor: middle; }
.chart .strong { font-weight: 700; }
.chart .tag-text { fill: #fff; font-weight: 600; }
.wick, .body { fill: #0b0b0b; }
.core { fill: #47704f; }
.ma-fast { stroke: #e9bd8c; stroke-width: 1; }
.ma-slow { stroke: #7b78cf; stroke-width: 1; }
.sketch { stroke: #c5274f; stroke-width: 1.5; stroke-linecap: round; }
.arrow { stroke: #111; stroke-width: 1.5; stroke-linecap: round; }
.guide { stroke: #d2d2d2; stroke-dasharray: 1 2; }
.cursor { stroke: #111; stroke-width: 1.5; }
```
FILE: chart.js
```
const svg = document.getElementById('chart');

function draw(tag, attrs, text) {
  const el = document.createElementNS('http://www.w3.org/2000/svg', tag);
  for (const key in attrs) el.setAttribute(key, attrs[key]);
  if (text) el.textContent = text;
  svg.appendChild(el);
  return el;
}

// smooth line through a list of points
function curve(cls, pts) {
  let d = 'M' + pts[0];
  for (let i = 0; i < pts.length - 1; i++) {
    const a = pts[i - 1] || pts[i], b = pts[i], c = pts[i + 1], e = pts[i + 2] || c;
    d += 'C' + [b[0] + (c[0] - a[0]) / 6, b[1] + (c[1] - a[1]) / 6, c[0] - (e[0] - b[0]) / 6, c[1] - (e[1] - b[1]) / 6, c[0], c[1]].join(' ');
  }
  draw('path', { class: cls, d: d });
}

// candles: x, high, body top, body bottom, low, up — in thirds of a unit from the block origin
const blocks = [
  { x: 36, y: 480, bars: [
    [11,336,340,357,370,0],[23,332,345,348,380,0],[34,308,340,357,360,1],[45,320,337,341,350,0],[57,328,336,344,350,0],
    [68,338,340,368,374,0],[80,358,372,375,392,0],[91,362,377,380,390,0],[102,342,346,388,390,1],[114,316,321,346,353,1],
    [126,272,274,305,307,1],[138,243,245,294,310,0],[149,289,296,300,308,0],[161,307,310,348,353,0],[172,313,326,335,341,1],
    [184,300,303,334,340,0],[195,318,333,339,352,0],[207,337,339,386,388,0],[218,375,388,391,392,0],[230,371,375,393,403,1],
    [240,353,362,377,383,1],[252,360,370,384,392,0],[264,362,390,396,399,0],[275,392,394,430,433,0],[287,405,412,430,432,1],
    [298,413,417,440,442,0],[310,435,440,460,463,0],[321,415,419,458,462,1],[333,425,427,454,463,0],[344,420,436,463,467,1],
    [356,418,424,438,442,1],[367,383,386,425,428,1],[379,366,382,387,392,0],[391,370,381,384,395,0],[402,379,381,435,444,0],
    [414,410,429,434,437,0],[425,430,433,450,454,0],[437,440,454,458,470,0],[447,438,446,470,473,0],[460,438,452,458,462,0],
    [471,430,442,457,462,1],[482,405,440,444,447,0],[494,428,430,459,463,0],[505,420,430,474,476,1],[518,393,395,427,430,1],
    [529,350,355,392,400,1],[541,340,352,378,382,0],[552,340,374,376,382,0],[563,325,334,349,352,1],[574,341,344,380,384,0],
    [586,366,378,381,388,0],[598,348,376,384,398,0],[609,370,384,390,394,0],[621,357,361,383,386,1],[632,357,361,386,390,0],
    [644,372,384,393,397,0],[656,357,367,393,398,1],[667,360,367,376,382,0],[679,365,380,388,394,0],[690,348,380,385,392,0],
    [701,365,367,392,397,1],[713,333,357,362,378,0],[725,342,356,361,373,0],[736,345,357,361,364,0],[748,337,343,359,362,1],
    [759,306,308,343,345,1],[770,266,268,304,318,1],[782,258,263,272,283,0],[794,242,246,282,284,1],[804,222,246,262,276,0],
    [817,242,268,298,303,0],[827,272,296,312,322,0],[839,286,289,323,326,1],[851,277,282,286,292,0],[862,254,256,284,294,1],
    [875,212,238,253,260,0],[886,252,254,284,286,0],[898,243,262,284,287,1],[908,208,213,264,270,1],[920,192,195,217,219,1],
    [931,124,189,197,203,0],[944,142,150,208,211,1],[954,70,90,128,152,1],[966,72,93,122,125,0],[977,40,42,130,142,1]
  ] },
  { x: 340, y: 200, bars: [
    [77,822,865,888,898,0],[90,715,722,884,886,1],[100,594,658,690,742,0],[112,660,690,718,745,1],[124,563,680,694,696,0],
    [135,546,548,687,691,1],[146,582,584,610,645,0],[158,518,575,577,627,0],[169,533,558,650,670,0],[181,618,652,696,708,0],
    [193,692,702,864,900,0],[204,762,773,860,890,1],[216,741,748,773,800,1],[227,772,780,828,840,0],[239,777,803,815,830,1],
    [250,670,672,812,825,1],[262,577,622,666,673,1],[273,530,535,602,613,0],[285,558,584,607,610,1],[295,524,550,588,617,1],
    [308,400,510,528,567,1],[320,460,495,543,545,0],[331,434,448,535,546,1],[343,424,432,445,537,0],[353,243,288,450,453,1],
    [366,238,277,289,332,1],[377,236,300,317,320,0],[389,277,286,317,360,1],[400,181,213,248,261,1],[412,50,130,158,178,1],
    [422,156,183,300,315,0],[434,246,254,430,432,1],[447,214,216,426,447,0],[458,367,370,423,487,1],[470,316,381,389,410,0],
    [480,393,400,530,531,0],[493,418,450,483,506,1],[503,375,396,463,468,1],[515,376,414,430,471,1],[526,436,444,450,502,0],
    [538,285,287,401,403,1],[549,177,185,206,271,0],[561,138,214,216,231,0],[574,186,193,279,289,0],[584,288,290,405,408,0],
    [597,426,428,432,512,0],[607,391,417,462,477,0],[619,478,497,544,546,1],[630,368,375,449,465,1],[642,373,418,420,433,0],
    [653,365,395,423,472,1],[665,387,397,477,487,0],[677,470,498,500,545,0],[688,433,436,502,505,1],[701,470,497,535,538,0],
    [711,476,530,556,560,0],[723,467,520,555,558,1],[734,517,530,548,568,0],[746,495,510,590,597,0],[756,645,662,725,727,0],
    [769,682,703,707,776,0]
  ] },
  { x: 580, y: 110, bars: [
    [58,890,935,940,952,0],[71,855,900,955,962,1],[84,808,885,900,902,0],[95,855,868,903,918,1],[107,798,800,857,890,1],
    [118,800,805,847,858,0],[130,815,848,867,875,0],[140,803,808,880,902,1],[152,800,803,805,855,0],[163,715,745,805,808,1],
    [175,732,772,776,788,0],[186,765,768,786,820,1],[198,753,755,818,822,0],[210,765,780,820,862,1],[221,785,800,862,864,0],
    [233,855,872,915,940,0],[244,843,853,922,928,1],[257,835,862,877,882,0],[267,823,838,870,872,0],[279,765,772,850,852,1],
    [290,727,752,775,778,1],[302,697,702,737,747,1],[313,658,710,722,727,0],[325,660,683,710,713,1],[337,647,652,727,730,0],
    [348,692,694,728,730,1],[360,572,574,656,658,1],[371,472,512,567,570,1],[382,420,443,448,483,0],[394,372,438,453,456,0],
    [406,418,434,458,492,1],[417,357,359,408,416,1],[429,343,370,457,476,0],[440,367,418,434,458,1],[452,350,355,434,463,1],
    [463,198,221,307,310,1],[474,192,204,238,250,0],[487,185,247,267,290,0],[497,112,135,277,279,1],[509,43,53,158,188,0],
    [520,130,132,180,205,1],[532,117,142,234,243,0],[543,135,155,243,288,1],[555,42,70,117,126,1],[568,70,74,217,226,0],
    [578,157,202,227,298,1],[590,243,258,395,402,0],[601,308,318,336,410,0],[614,380,382,403,440,0],[624,440,450,487,518,1],
    [636,440,487,505,524,1],[647,357,369,408,432,1],[658,333,367,370,382,0],[670,390,400,414,430,0],[682,350,357,385,405,1],
    [694,302,352,378,384,1],[705,346,347,353,355,0],[717,348,350,374,377,0],[728,340,345,365,380,1],[740,285,305,322,350,0],
    [751,282,302,310,372,0],[763,246,280,286,337,0],[773,300,308,332,368,1],[786,322,381,383,385,0],[796,350,366,558,569,0]
  ] }
];

// crosshair guides
draw('path', { class: 'guide', d: 'M39 429.5H1235M1099.5 90V674' });

// highlighted zone
draw('rect', { x: 539, y: 335, width: 38, height: 7, fill: '#a9dfaa' });

// moving averages
curve('ma-fast', [[39,585],[66,587],[89,587],[103,588],[126,592],[151,600],[169,602],[203,610],[223,609],[249,608],[276,608],[289,605],[306,599],[336,592],[353,584],[366,572],[376,558],[387,541],[404,527],[425,510],[443,489],[457,469],[477,433],[483,424],[497,412],[515,401],[527,387],[540,379],[553,374],[573,371],[587,372],[620,378],[650,382],[680,382],[697,375],[717,355],[730,340],[753,304],[770,282],[783,275],[797,272],[827,261],[837,256],[843,254]]);
curve('ma-slow', [[39,647],[73,643],[103,639],[129,637],[169,635],[206,634],[236,632],[289,629],[319,624],[343,620],[359,616],[376,609],[400,596],[430,581],[450,571],[480,553],[500,540],[520,530],[545,517],[565,510],[597,500],[640,491],[670,481],[697,472],[725,457],[751,440],[773,424],[797,413],[828,399],[845,392]]);

// levels
[
  [473, 1038, 216, '#a8304f', 1.8],
  [450, 681, 378.5, '#0b0b0b', 2],
  [392, 696, 384, '#4a4f4a', 1],
  [392, 696, 413, '#4a4a4a', 1],
  [392, 696, 442, '#b8506a', 1],
  [392, 696, 471, '#4a4a4a', 1],
  [392, 696, 500, '#3a3a3a', 1]
].forEach(l => draw('path', { d: `M${l[0]} ${l[2]}H${l[1]}`, stroke: l[3], 'stroke-width': l[4] }));

for (const block of blocks) {
  for (const [px, high, top, bottom, low, up] of block.bars) {
    const x = block.x + px / 3;
    const y = v => block.y + v / 3;
    draw('rect', { class: 'wick', x: x - 0.4, y: y(high), width: 0.9, height: (low - high) / 3 });
    const h = Math.max((bottom - top) / 3, 1);
    draw('rect', { class: 'body', x: x - 1.2, y: y(top), width: 2.4, height: h });
    if (up && h > 2) draw('rect', { class: 'core', x: x - 0.5, y: y(top) + 0.7, width: 1, height: h - 1.4 });
  }
}

// hand drawn arrow on the November low
curve('arrow', [[577,386],[583,377],[588,371],[592,377],[596,394],[600,410]]);
curve('arrow', [[590,403],[595,408],[600,410],[602,404],[603,395]]);

// hand drawn projection
curve('sketch', [[797,235],[801,223],[804,217],[807,220],[810,227],[817,227],[821,235],[826,230],[828,238],[831,254],[834,257],[836,263],[838,268],[843,268],[847,280],[850,290],[853,311],[856,314],[858,334],[864,325],[868,328],[870,343],[874,333],[876,338],[879,365],[881,360],[884,367],[887,361],[890,347],[896,346],[900,335],[905,319],[911,311],[916,296],[920,291],[926,300],[931,293],[937,279],[940,288],[945,317],[951,309],[954,326],[959,344],[963,335],[969,303],[973,291],[978,301],[982,275],[984,258],[987,252],[994,267],[997,257],[999,250],[1003,254],[1006,241],[1011,230]]);
curve('sketch', [[868,361],[874,363],[879,366],[878,361]]);
curve('sketch', [[928,385],[942,372],[957,358]]);
curve('sketch', [[952,357],[961,351],[971,346],[970,353],[966,365],[961,372]]);
curve('sketch', [[634,348],[655,349],[700,349],[740,348],[765,348],[793,352],[813,353],[823,356],[828,363],[830,377],[830,395],[828,407],[820,412],[780,412],[720,411],[690,412],[660,415],[652,413],[647,405],[645,390],[642,377]]);
curve('sketch', [[642,351],[680,354],[747,355],[820,354],[870,356],[911,356]]);
curve('sketch', [[780,413],[830,415],[880,417],[926,418]]);

// cursor
draw('path', { class: 'cursor', d: 'M1099.5 421V438M1091 429.5H1108' });

// price scale
const prices = { '7,200.00': 140, '7,000.00': 174, '6,800.00': 208, '6,600.00': 242, '6,400.00': 276, '6,200.00': 310, '6,000.00': 344, '5,600.00': 412, '5,400.00': 447, '5,200.00': 481, '5,000.00': 515, '4,800.00': 549, '4,600.00': 583, '4,400.00': 617, '4,200.00': 651 };
for (const p in prices) draw('text', { class: 'tick', x: 1288, y: prices[p] + 3 }, p);

function tag(label, y, color) {
  draw('rect', { x: 1250, y: y - 6, width: 41, height: 12, fill: color });
  draw('text', { class: 'tick tag-text', x: 1288, y: y + 3 }, label);
}
tag('6,759.64', 216, '#d8244a');
tag('6,289.19', 296, '#000');
tag('5,808.87', 378, '#000');
draw('rect', { x: 1235, y: 422, width: 56, height: 15, fill: '#131722' });
draw('text', { class: 'tick tag-text', x: 1288, y: 432 }, '5,506.17');
draw('circle', { cx: 1242, cy: 429.5, r: 5, stroke: '#fff' });
draw('path', { d: 'M1239 429.5H1245M1242 426.500V432.500', stroke: '#fff' });
draw('path', { d: 'M1249.500 422V437', stroke: '#777' });

// time scale
[['May', 77], ['Jun', 150], ['Jul', 227], ['Aug', 312], ['Sep', 392], ['Oct', 476], ['Nov', 538], ['Dec', 615], ['Feb', 776], ['Mar', 841], ['Apr', 926], ['May', 999], ['Jul', 1152], ['Aug', 1237]]
  .forEach(m => draw('text', { class: 'month', x: m[1], y: 686 }, m[0]));
draw('text', { class: 'month strong', x: 696, y: 686 }, '2026');
draw('rect', { x: 1065, y: 674, width: 68, height: 16, rx: 1, fill: '#131722' });
draw('text', { class: 'month tag-text', x: 1099, y: 686 }, "Wed 10 Jun '26");
draw('path', { d: 'M1269.500 679H1275L1278 683.500L1275 688H1269.500L1267 683.500Z', stroke: '#555' });
draw('circle', { cx: 1272.300, cy: 683.500, r: 1.500, stroke: '#555' });

// logo
draw('path', { d: 'M47 653.500H57V664H52V658H47ZM62 653.500H68L64 664H58Z', fill: '#111' });
draw('circle', { cx: 59.500, cy: 655.500, r: 2, fill: '#111' });
```
